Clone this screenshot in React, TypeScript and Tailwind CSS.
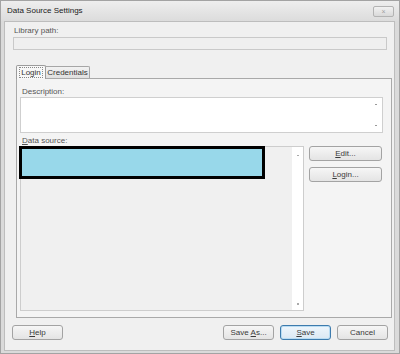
import React from 'react';

const font = { fontFamily: '"Liberation Sans", Arial, sans-serif' };

function Btn({ children, focused = false, className = '' }: { children: React.ReactNode; focused?: boolean; className?: string }) {
  return (
    <div
      className={`h-[15px] rounded-[3px] border flex items-center justify-center text-[8px] text-[#3a3a3a] ${
        focused
          ? 'border-[#3d7bad] bg-gradient-to-b from-[#eef6fc] to-[#dbe8f3] shadow-[inset_0_0_0_1px_#b9dcf3]'
          : 'border-[#a3a3a3] bg-gradient-to-b from-[#f6f6f6] to-[#e4e4e4]'
      } ${className}`}
    >
      {children}
    </div>
  );
}

export default function App() {
  return (
    <div style={font} className="w-[400px] h-[354px] bg-[#dadada] border border-[#a3a3a3] flex flex-col overflow-hidden">
      {/* title bar */}
      <div className="h-[20px] shrink-0 flex items-center justify-between pl-[6px] pr-[5px] bg-gradient-to-b from-[#eeeeee] to-[#dcdcdc]">
        <span className="text-[8px] text-[#1a1a1a]">Data Source Settings</span>
        <div className="w-[21px] h-[11px] rounded-[2px] border border-[#b3b3b3] bg-gradient-to-b from-[#f2f2f2] to-[#d9d9d9] flex items-center justify-center text-[7px] leading-none text-[#a0a0a0]">
          ×
        </div>
      </div>

      {/* client area */}
      <div className="ml-[3px] w-[391px] h-[330px] bg-[#f0f0f0] border border-[#bdbdbd] flex flex-col">
        <div className="pl-[9px] pt-[4px] text-[8px] leading-[10px] text-[#555]">Library path:</div>
        <div className="ml-[8px] mt-[1px] w-[374px] h-[13px] bg-[#efefef] border border-[#c9c9c9]" />

        {/* tabs */}
        <div className="ml-[11px] mt-[15px] flex items-end h-[13px]">
          <div className="w-[30px] h-[14px] -mb-[1px] bg-[#f8f8f8] border border-[#9c9c9c] border-b-0 rounded-t-[2px] flex items-center justify-center relative z-10">
            <span className="text-[8px] leading-[9px] text-[#333] border border-dotted border-[#888] px-[1px]">Login</span>
          </div>
          <div className="w-[44px] h-[12px] bg-gradient-to-b from-[#f2f2f2] to-[#e0e0e0] border border-[#a6a6a6] border-b-0 border-l-0 rounded-tr-[2px] flex items-center justify-center text-[8px] text-[#333]">
            Credentials
          </div>
        </div>
        <div className="ml-[11px] w-[376px] h-[240px] bg-[#f4f4f4] border border-[#a9a9a9] flex flex-col">
          <div className="pl-[5px] pt-[8px] text-[8px] leading-[10px] text-[#555]">Description:</div>
          <div className="ml-[3px] w-[363px] h-[36px] bg-white border border-[#cfcfcf] flex flex-col items-end justify-between py-[6px] pr-[5px]">
            <div className="w-[2px] h-[1px] bg-[#999]" />
            <div className="w-[2px] h-[1px] bg-[#999]" />
          </div>

          <div className="pl-[5px] pt-[3px] text-[8px] leading-[10px] text-[#555]">
            <span className="underline">D</span>ata source:
          </div>
          <div className="flex items-start">
            <div className="ml-[3px] w-[284px] h-[165px] bg-[#f0f0f0] border border-[#cdcdcd] flex">
              <div className="flex-1">
                <div className="-ml-[2px] -mt-[1px] w-[246px] h-[33px] bg-[#98d8ea] border-[3px] border-black" />
              </div>
              <div className="w-[11px] bg-white flex flex-col items-center justify-between pt-[8px] pb-[5px]">
                <div className="w-[2px] h-[1px] bg-[#aaa]" />
                <div className="w-[2px] h-[2px] bg-[#aaa]" />
              </div>
            </div>
            <div className="ml-[5px] flex flex-col gap-[6px]">
              <Btn className="w-[73px]"><span className="underline">E</span>dit...</Btn>
              <Btn className="w-[73px]"><span className="underline">L</span>ogin...</Btn>
            </div>
          </div>
        </div>

        {/* footer buttons */}
        <div className="mt-[7px] flex items-center justify-between pl-[7px] pr-[6px]">
          <Btn className="w-[51px]"><span className="underline">H</span>elp</Btn>
          <div className="flex gap-[6px]">
            <Btn className="w-[51px]">Save <span className="underline ml-[2px]">A</span>s...</Btn>
            <Btn focused className="w-[51px]"><span className="underline">S</span>ave</Btn>
            <Btn className="w-[51px]">Cancel</Btn>
          </div>
        </div>
      </div>
    </div>
  );
}
